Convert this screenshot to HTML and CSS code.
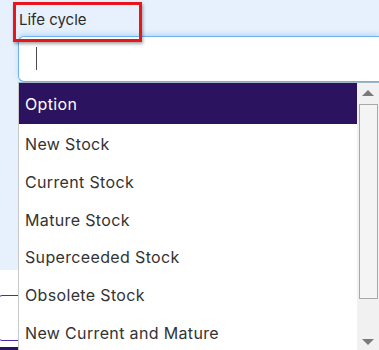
FILE: index.html
```html
<!DOCTYPE html>
<html lang="en">
<head>
    <meta charset="UTF-8">
    <meta name="viewport" content="width=device-width, initial-scale=1.0">
    <title>Life cycle</title>
    <link rel="stylesheet" href="styles.css">
</head>
<body>
    <div class="panel">
        <div class="label">Life cycle</div>
        <div class="highlight"></div>
        <div class="input">
            <span class="caret"></span>
        </div>
    </div>
    <div class="behind">
        <div class="behind-box"></div>
        <div class="behind-bar"></div>
    </div>

    <div class="dropdown">
        <ul class="options">
            <li class="option head">Option</li>
            <li class="option">New Stock</li>
            <li class="option">Current Stock</li>
            <li class="option">Mature Stock</li>
            <li class="option">Superceeded Stock</li>
            <li class="option">Obsolete Stock</li>
            <li class="option">New Current and Mature</li>
        </ul>
        <div class="scrollbar">
            <div class="arrow up"></div>
            <div class="thumb"></div>
            <div class="arrow down"></div>
        </div>
    </div>
</body>
</html>
```

FILE: styles.css
```css
* {
    margin: 0;
    padding: 0;
    box-sizing: border-box;
}

body {
    font-family: Inter, "Noto Sans", sans-serif;
    background: #ffffff;
    width: 379px;
    height: 350px;
    overflow: hidden;
    position: relative;
}

.panel {
    height: 270px;
    background: #e7f1fd;
    padding-top: 10px;
}

.label {
    font-size: 15px;
    line-height: 20px;
    color: #2b2b2b;
    padding-left: 19px;
    height: 26px;
}

.highlight {
    position: absolute;
    left: 13px;
    top: 2px;
    width: 129px;
    height: 40px;
    border: 3px solid #e8151b;
    box-shadow: 1px 2px 3px rgba(0, 0, 0, 0.35);
}

.input {
    margin-left: 18px;
    height: 46px;
    background: #ffffff;
    border: 1px solid #6db3ef;
    border-right: none;
    border-radius: 6px 0 0 6px;
    box-shadow: 0 -2px 5px rgba(110, 170, 235, 0.35);
    padding: 10px 0 0 17px;
}

.caret {
    display: block;
    width: 1px;
    height: 23px;
    background: #4a4a4a;
}

.behind-box {
    position: absolute;
    left: -2px;
    top: 295px;
    width: 40px;
    height: 46px;
    border: 1px solid #4b2ab0;
    border-radius: 4px;
}

.behind-bar {
    position: absolute;
    left: 0;
    top: 347px;
    width: 40px;
    height: 3px;
    background: #2c1360;
}

.dropdown {
    position: absolute;
    left: 18px;
    top: 82px;
    width: 361px;
    height: 268px;
    background: #ffffff;
    border-left: 1px solid #c9c9c9;
    border-top: 1px solid #9fb7cc;
    display: flex;
}

.options {
    list-style: none;
    flex: 1;
}

.option {
    height: 37.8px;
    line-height: 37.8px;
    padding: 2px 0 0 6px;
    font-size: 16px;
    letter-spacing: 0.35px;
    color: #333333;
}

.option.head {
    height: 41px;
    line-height: 40px;
    padding-top: 1px;
    background: #2c1360;
    color: #ffffff;
}

.scrollbar {
    width: 22px;
    background: #f1f1f1;
    display: flex;
    flex-direction: column;
    align-items: center;
    padding-top: 7px;
}

.arrow {
    width: 0;
    height: 0;
    border-left: 6px solid transparent;
    border-right: 6px solid transparent;
}

.arrow.up {
    border-bottom: 6px solid #7a7a7a;
}

.thumb {
    margin-top: 8px;
    width: 19px;
    height: 195px;
    background: #f4f4f4;
    border: 1px solid #a9a9a9;
}

.arrow.down {
    margin-top: 40px;
    border-top: 6px solid #7a7a7a;
}
```
